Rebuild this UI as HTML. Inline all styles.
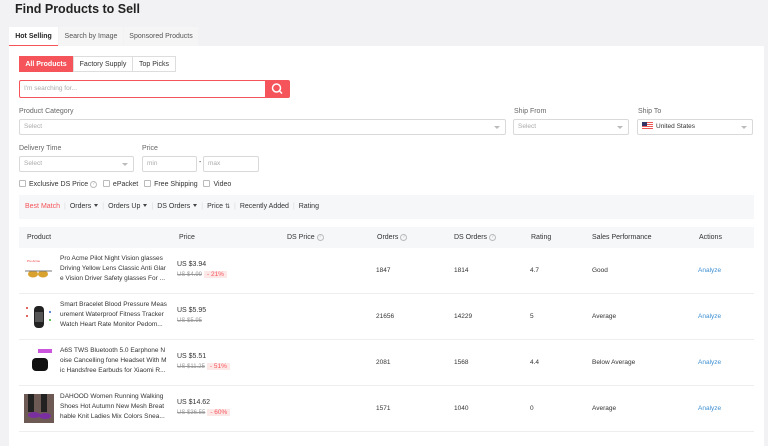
<!DOCTYPE html>
<html><head><meta charset="utf-8"><style>
*{box-sizing:border-box;margin:0;padding:0}
body{width:768px;height:434px;overflow:hidden;background:#f2f2f4;font-family:"Liberation Sans",Arial,sans-serif;color:#333;position:relative;font-size:7px}
.a{position:absolute}
h1{position:absolute;left:15px;top:2px;font-size:12.5px;font-weight:bold;color:#222}
.tab{position:absolute;top:27px;height:19px;font-size:7px;line-height:19px;text-align:center;background:#f5f5f6;color:#555}
.panel{position:absolute;left:9px;top:46px;width:755px;height:400px;background:#fff}
.btn{position:absolute;top:56px;height:16px;line-height:15px;font-size:7px;text-align:center;border:1px solid #ddd;background:#fff;color:#333}
.inp{position:absolute;border:1px solid #d9d9d9;border-radius:2px;background:#fff;height:16px;line-height:14px;padding-left:4px;color:#aaa;font-size:6.5px}
.lab{position:absolute;font-size:7px;color:#666}
.car{position:absolute;right:5px;top:6px;width:0;height:0;border-left:3px solid transparent;border-right:3px solid transparent;border-top:3px solid #bbb}
.cb{display:inline-block;width:7px;height:7px;border:1px solid #bbb;border-radius:1px;vertical-align:-1px;margin-right:3px}
.q{display:inline-block;width:7px;height:7px;border:1px solid #bbb;border-radius:50%;font-size:5px;line-height:5px;text-align:center;color:#bbb;vertical-align:middle}
.dn{display:inline-block;border-left:2.5px solid transparent;border-right:2.5px solid transparent;border-top:3px solid #444;margin-left:3px;vertical-align:1px}
.sep{color:#ddd;margin:0 4px}
.row{position:absolute;left:19px;width:735px;height:46px;border-bottom:1px solid #eee}
.t{position:absolute;font-size:6.5px;line-height:10px;color:#333}
.c{position:absolute;font-size:6.5px;top:19px}
.old{text-decoration:line-through;color:#999;font-size:6px}
.pct{background:#fde8e8;color:#f4545a;padding:0 3px;font-size:6.5px}
</style></head><body>
<h1>Find Products to Sell</h1>
<div class="tab" style="left:9px;width:49px;background:#fff;color:#222;font-weight:bold;border-bottom:1px solid #f4545a">Hot Selling</div>
<div class="tab" style="left:59px;width:64px">Search by Image</div>
<div class="tab" style="left:124px;width:74px">Sponsored Products</div>
<div class="panel"></div>
<div class="btn" style="left:19px;width:54px;background:#f4545a;color:#fff;border-color:#f4545a;font-weight:bold">All Products</div>
<div class="btn" style="left:73px;width:60px">Factory Supply</div>
<div class="btn" style="left:132px;width:44px">Top Picks</div>
<div class="inp" style="left:19px;top:80px;width:250px;height:18px;line-height:16px;border-color:#f4545a;border-radius:2px 0 0 2px">I'm searching for...</div>
<div class="a" style="left:265px;top:80px;width:25px;height:18px;background:#f4545a;border-radius:0 2px 2px 0"><svg width="25" height="18"><circle cx="11.5" cy="8" r="4" fill="none" stroke="#fff" stroke-width="1.5"/><line x1="14.5" y1="11" x2="17" y2="13.5" stroke="#fff" stroke-width="1.5"/></svg></div>
<div class="lab" style="left:19px;top:108px">Product Category</div>
<div class="inp" style="left:19px;top:119px;width:487px">Select<span class="car"></span></div>
<div class="lab" style="left:514px;top:108px">Ship From</div>
<div class="inp" style="left:513px;top:119px;width:116px">Select<span class="car"></span></div>
<div class="lab" style="left:638px;top:108px">Ship To</div>
<div class="inp" style="left:637px;top:119px;width:116px;color:#333"><span style="display:inline-block;width:11px;height:7px;vertical-align:-1px;margin-right:3px;background:repeating-linear-gradient(#e55 0 1px,#fff 1px 2px);position:relative"><span style="position:absolute;left:0;top:0;width:5px;height:4px;background:#336"></span></span>United States<span class="car"></span></div>
<div class="lab" style="left:19px;top:145px">Delivery Time</div>
<div class="inp" style="left:19px;top:156px;width:115px">Select<span class="car"></span></div>
<div class="lab" style="left:142px;top:145px">Price</div>
<div class="inp" style="left:142px;top:156px;width:55px">min</div>
<div class="lab" style="left:199px;top:159px;color:#333">-</div>
<div class="inp" style="left:203px;top:156px;width:56px">max</div>
<div class="a" style="left:19px;top:180px;font-size:7px;color:#333"><span class="cb"></span>Exclusive DS Price <span class="q">?</span> &nbsp;&nbsp;<span class="cb"></span>ePacket &nbsp;&nbsp;<span class="cb"></span>Free Shipping &nbsp;&nbsp;<span class="cb"></span>Video</div>
<div class="a" style="left:19px;top:195px;width:735px;height:24px;background:#f6f7f9;padding-left:6px;line-height:24px;font-size:7px;color:#333"><span style="color:#f4545a">Best Match</span><span class="sep">|</span>Orders<span class="dn"></span><span class="sep">|</span>Orders Up<span class="dn"></span><span class="sep">|</span>DS Orders<span class="dn"></span><span class="sep">|</span>Price <span style="font-size:6px">⇅</span><span class="sep">|</span>Recently Added<span class="sep">|</span>Rating</div>
<div class="a" style="left:19px;top:227px;width:735px;height:21px;background:#f6f7f9;font-size:7px;line-height:21px;color:#333">
<span class="a" style="left:8px">Product</span><span class="a" style="left:160px">Price</span><span class="a" style="left:268px">DS Price <span class="q">?</span></span><span class="a" style="left:358px">Orders <span class="q">?</span></span><span class="a" style="left:435px">DS Orders <span class="q">?</span></span><span class="a" style="left:512px">Rating</span><span class="a" style="left:573px">Sales Performance</span><span class="a" style="left:680px">Actions</span></div>

<div class="row" style="top:248px">
<svg class="a" style="left:5px;top:10px" width="30" height="26"><text x="3" y="4" font-size="3" fill="#e33">Pro Acme</text><ellipse cx="9" cy="16" rx="5" ry="3.5" fill="#d9a12e"/><ellipse cx="19" cy="16" rx="5" ry="3.5" fill="#d9a12e"/><path d="M1 13 H28" stroke="#777" stroke-width="1"/></svg>
<div class="t" style="left:41px;top:6px">Pro Acme Pilot Night Vision glasses<br>Driving Yellow Lens Classic Anti Glar<br>e Vision Driver Safety glasses For ...</div>
<div class="t" style="left:158px;top:12px;font-size:7px">US $3.94<br><span class="old">US $4.99</span> <span class="pct">- 21%</span></div>
<div class="c" style="left:357px">1847</div><div class="c" style="left:435px">1814</div><div class="c" style="left:511px">4.7</div><div class="c" style="left:573px">Good</div><div class="c" style="left:679px;color:#3d8fd1">Analyze</div></div>

<div class="row" style="top:294px">
<svg class="a" style="left:5px;top:8px" width="30" height="30"><rect x="10" y="4" width="10" height="22" rx="4" fill="#222"/><rect x="11" y="10" width="8" height="10" fill="#555"/><g fill="#d33"><circle cx="3" cy="6" r="1"/><circle cx="3" cy="14" r="1"/><circle cx="26" cy="18" r="1" fill="#3a3"/><circle cx="26" cy="10" r="1" fill="#36c"/></g></svg>
<div class="t" style="left:41px;top:6px">Smart Bracelet Blood Pressure Meas<br>urement Waterproof Fitness Tracker<br>Watch Heart Rate Monitor Pedom...</div>
<div class="t" style="left:158px;top:12px;font-size:7px">US $5.95<br><span class="old">US $5.95</span></div>
<div class="c" style="left:357px">21656</div><div class="c" style="left:435px">14229</div><div class="c" style="left:511px">5</div><div class="c" style="left:573px">Average</div><div class="c" style="left:679px;color:#3d8fd1">Analyze</div></div>

<div class="row" style="top:340px">
<svg class="a" style="left:5px;top:8px" width="30" height="30"><rect x="14" y="1" width="14" height="4" fill="#c5d" /><rect x="8" y="10" width="16" height="13" rx="4" fill="#111"/></svg>
<div class="t" style="left:41px;top:6px">A6S TWS Bluetooth 5.0 Earphone N<br>oise Cancelling fone Headset With M<br>ic Handsfree Earbuds for Xiaomi R...</div>
<div class="t" style="left:158px;top:12px;font-size:7px">US $5.51<br><span class="old">US $11.25</span> <span class="pct">- 51%</span></div>
<div class="c" style="left:357px">2081</div><div class="c" style="left:435px">1568</div><div class="c" style="left:511px">4.4</div><div class="c" style="left:573px">Below Average</div><div class="c" style="left:679px;color:#3d8fd1">Analyze</div></div>

<div class="row" style="top:386px">
<svg class="a" style="left:5px;top:8px" width="30" height="30"><rect width="30" height="29" fill="#6d5a55"/><rect x="4" y="0" width="6" height="18" fill="#222"/><rect x="17" y="0" width="6" height="18" fill="#222"/><ellipse cx="10" cy="21" rx="6" ry="3" fill="#7a2fa0"/><ellipse cx="21" cy="22" rx="6" ry="3" fill="#7a2fa0"/></svg>
<div class="t" style="left:41px;top:6px">DAHOOD Women Running Walking<br>Shoes Hot Autumn New Mesh Breat<br>hable Knit Ladies Mix Colors Snea...</div>
<div class="t" style="left:158px;top:12px;font-size:7px">US $14.62<br><span class="old">US $36.55</span> <span class="pct">- 60%</span></div>
<div class="c" style="left:357px">1571</div><div class="c" style="left:435px">1040</div><div class="c" style="left:511px">0</div><div class="c" style="left:573px">Average</div><div class="c" style="left:679px;color:#3d8fd1">Analyze</div></div>
</body></html>
